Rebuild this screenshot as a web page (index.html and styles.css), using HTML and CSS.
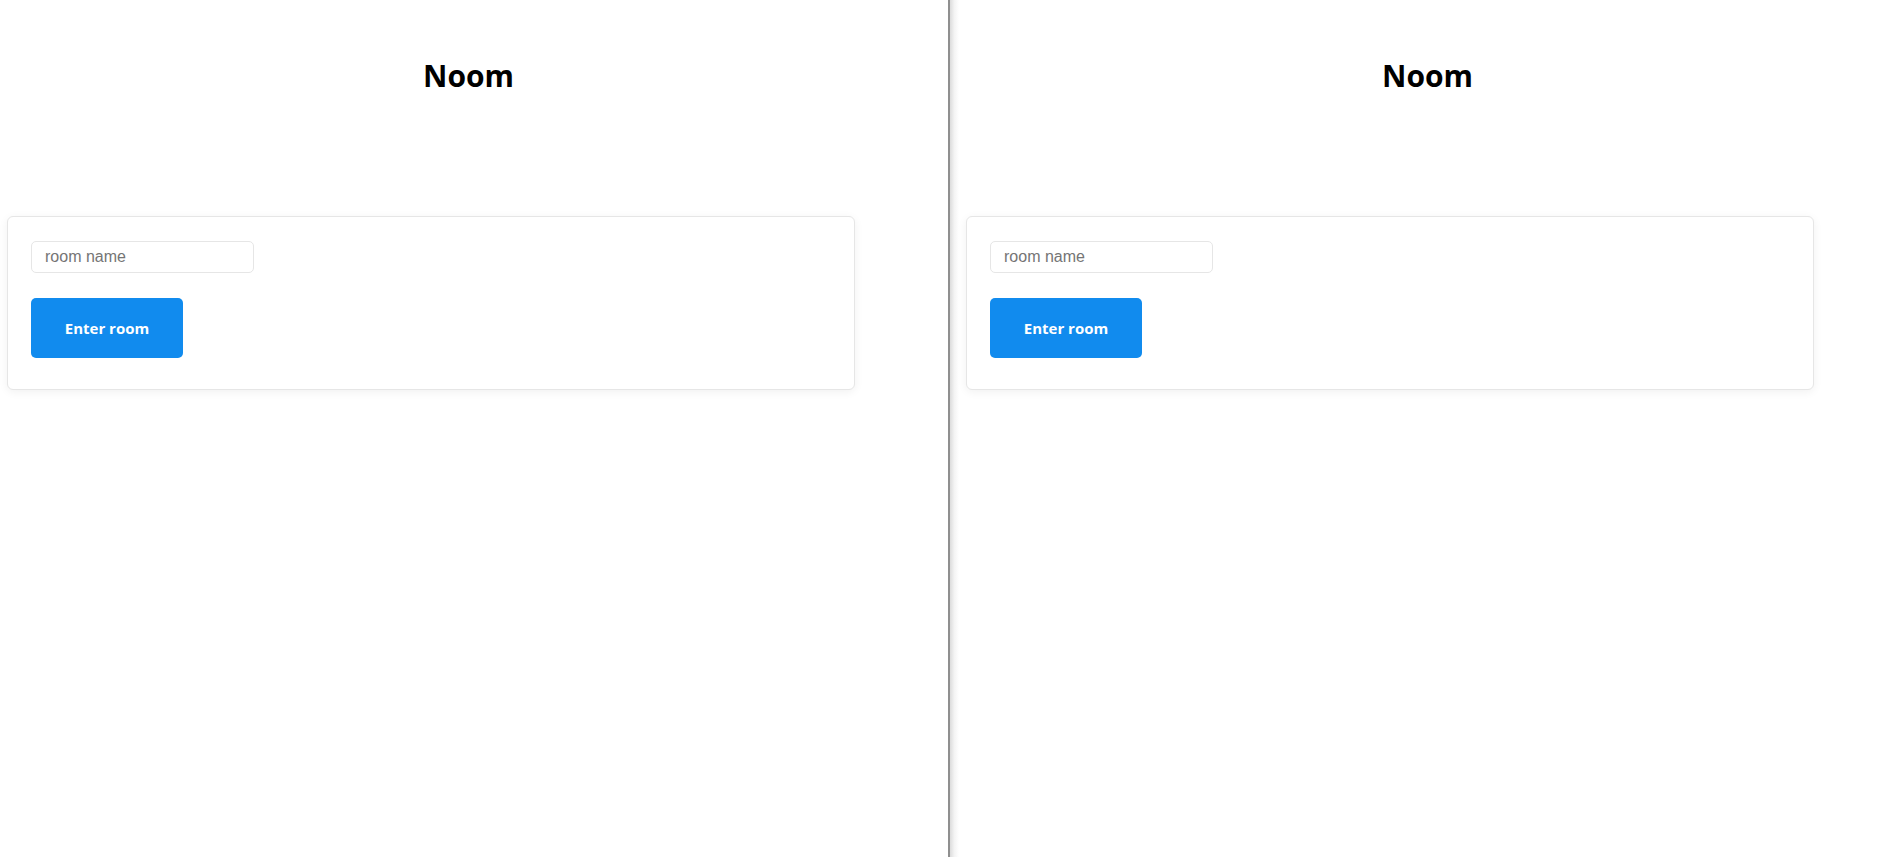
FILE: index.html
```html
<!DOCTYPE html>
<html lang="en">
<head>
<meta charset="utf-8">
<title>Noom</title>
<link rel="stylesheet" href="styles.css">
</head>
<body>
<div class="split">
  <div class="pane pane-left">
    <div class="app">
      <header class="app-header"><h1 class="title">Noom</h1></header>
      <main class="app-main">
        <div class="card">
          <form class="room-form">
            <input class="room-input" type="text" placeholder="room name">
            <button class="room-btn" type="button">Enter room</button>
          </form>
        </div>
      </main>
    </div>
  </div>
  <div class="divider"></div>
  <div class="pane pane-right">
    <div class="shade"></div>
    <div class="app">
      <header class="app-header"><h1 class="title">Noom</h1></header>
      <main class="app-main">
        <div class="card">
          <form class="room-form">
            <input class="room-input" type="text" placeholder="room name">
            <button class="room-btn" type="button">Enter room</button>
          </form>
        </div>
      </main>
    </div>
  </div>
</div>
</body>
</html>
```

FILE: styles.css
```css
* { box-sizing: border-box; }
html, body { margin: 0; padding: 0; background: #ffffff; }
body {
  width: 1897px;
  height: 857px;
  overflow: hidden;
  font-family: "Open Sans", "Noto Sans", sans-serif;
  color: #000;
}
.split {
  display: flex;
  height: 857px;
}
.pane {
  display: flex;
  height: 100%;
}
.pane-left {
  width: 948px;
}
.pane-right {
  width: 947px;
}
.divider {
  width: 2px;
  height: 100%;
  background: #8f8f8f;
  flex: none;
}
.shade {
  width: 9px;
  flex: none;
  height: 100%;
  background: linear-gradient(to right, #dcdcdc, #f4f4f4 50%, #ffffff);
}
.app {
  width: 937px;
  flex: none;
}
.app-header {
  padding-top: 56px;
  text-align: center;
}
.title {
  margin: 0;
  font-size: 30px;
  line-height: 40px;
  font-weight: 700;
}
.app-main {
  padding-top: 120px;
  padding-left: 7px;
}
.card {
  width: 848px;
  height: 174px;
  border: 1px solid #e6e6e6;
  border-radius: 6px;
  box-shadow: 0 2px 10px rgba(0, 0, 0, 0.06);
  padding: 24px 23px;
  background: #fff;
}
.room-form {
  display: flex;
  flex-direction: column;
  align-items: flex-start;
  gap: 25px;
  margin: 0;
}
.room-input {
  width: 223px;
  height: 32px;
  border: 1px solid #e6e6e6;
  border-radius: 5px;
  padding: 0 13px;
  font-family: "Liberation Sans", Arial, sans-serif;
  font-size: 16px;
  color: #000;
  background: #fff;
  outline: none;
}
.room-input::placeholder { color: #757575; }
.room-btn {
  width: 152px;
  height: 60px;
  border: none;
  border-radius: 5px;
  background: #118bee;
  color: #fff;
  font-family: "Open Sans", "Noto Sans", sans-serif;
  font-weight: 700;
  font-size: 15px;
  padding: 0;
  cursor: pointer;
}
```
